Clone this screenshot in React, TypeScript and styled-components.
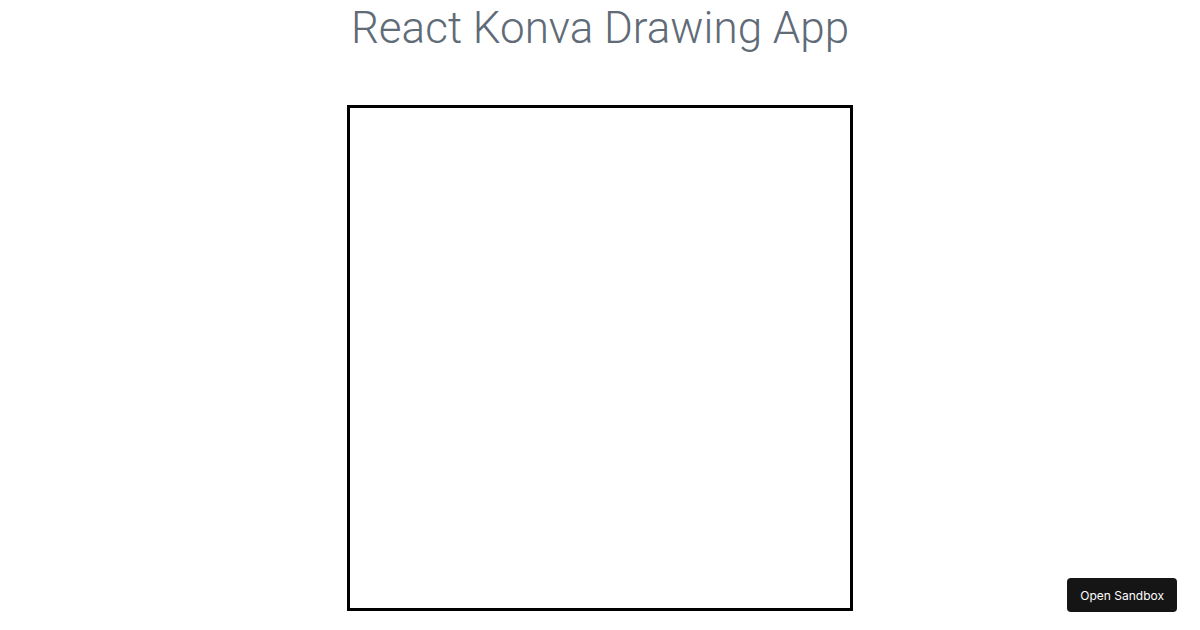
import React from "react";
import styled, { createGlobalStyle } from "styled-components";

const GlobalStyle = createGlobalStyle`
  body {
    margin: 0;
    background-color: #fff;
    font-family: Roboto, "Liberation Sans", sans-serif;
  }
`;

const Page = styled.div`
  display: flex;
  flex-direction: column;
  align-items: center;
  padding-top: 2px;
`;

const Title = styled.h1`
  margin: 0 0 51px;
  font-family: Roboto, "Liberation Sans", sans-serif;
  font-size: 44px;
  font-weight: 300;
  line-height: 52px;
  color: #5f6b77;
`;

const Stage = styled.div`
  width: 500px;
  height: 500px;
  border: 3px solid #000;
  background-color: #fff;
`;

const SandboxButton = styled.button`
  position: fixed;
  right: 23px;
  bottom: 18px;
  height: 34px;
  padding: 0 13px;
  border: none;
  border-radius: 4px;
  background-color: #151515;
  color: #fff;
  font-family: Inter, "Liberation Sans", sans-serif;
  font-size: 12px;
  cursor: pointer;
`;

const App = () => {
  return (
    <>
      <GlobalStyle />
      <Page>
        <Title>React Konva Drawing App</Title>
        <Stage />
      </Page>
      <SandboxButton>Open Sandbox</SandboxButton>
    </>
  );
};

export default App;
